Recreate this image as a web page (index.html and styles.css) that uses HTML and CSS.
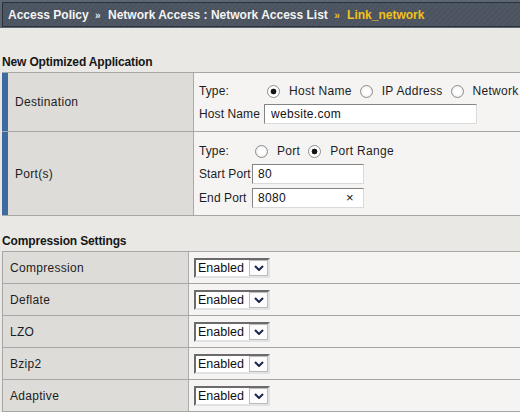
FILE: index.html
```html
<!DOCTYPE html>
<html lang="en">
<head>
<meta charset="utf-8">
<title>Link_network</title>
<link rel="stylesheet" href="styles.css">
</head>
<body>
<div class="topbar">
  <div class="crumbs">
    <span class="crumb">Access Policy</span>
    <span class="sep">»</span>
    <span class="crumb">Network Access : Network Access List</span>
    <span class="sep current">»</span>
    <span class="crumb current">Link_network</span>
  </div>
</div>

<h2 class="section-title">New Optimized Application</h2>
<div class="props">
  <div class="prop-row">
    <div class="prop-label">Destination</div>
    <div class="prop-value">
      <div class="fields dest">
        <span class="field-label">Type:</span>
        <div class="radios">
          <input type="radio" name="dtype" checked><span class="radio-text">Host Name</span>
          <input type="radio" name="dtype"><span class="radio-text">IP Address</span>
          <input type="radio" name="dtype"><span class="radio-text">Network</span>
        </div>
        <span class="field-label">Host Name</span>
        <div><input class="text wide" type="text" value="website.com"></div>
      </div>
    </div>
  </div>
  <div class="prop-row">
    <div class="prop-label">Port(s)</div>
    <div class="prop-value tall">
      <div class="fields ports">
        <span class="field-label">Type:</span>
        <div class="radios">
          <input type="radio" name="ptype"><span class="radio-text">Port</span>
          <input type="radio" name="ptype" checked><span class="radio-text">Port Range</span>
        </div>
        <span class="field-label">Start Port</span>
        <div><input class="text narrow" type="text" value="80"></div>
        <span class="field-label">End Port</span>
        <div class="clear-wrap"><input class="text narrow" type="text" value="8080"><span class="clear">×</span></div>
      </div>
    </div>
  </div>
</div>

<h2 class="section-title second">Compression Settings</h2>
<div class="settings">
  <div class="set-row">
    <div class="set-label">Compression</div>
    <div class="set-value"><span class="select"><span class="select-value">Enabled</span><span class="select-btn"><svg width="10" height="6" viewBox="0 0 10 6"><path d="M1 1 L5 5 L9 1" fill="none" stroke="#1c2550" stroke-width="2"/></svg></span></span></div>
  </div>
  <div class="set-row">
    <div class="set-label">Deflate</div>
    <div class="set-value"><span class="select"><span class="select-value">Enabled</span><span class="select-btn"><svg width="10" height="6" viewBox="0 0 10 6"><path d="M1 1 L5 5 L9 1" fill="none" stroke="#1c2550" stroke-width="2"/></svg></span></span></div>
  </div>
  <div class="set-row">
    <div class="set-label">LZO</div>
    <div class="set-value"><span class="select"><span class="select-value">Enabled</span><span class="select-btn"><svg width="10" height="6" viewBox="0 0 10 6"><path d="M1 1 L5 5 L9 1" fill="none" stroke="#1c2550" stroke-width="2"/></svg></span></span></div>
  </div>
  <div class="set-row">
    <div class="set-label">Bzip2</div>
    <div class="set-value"><span class="select"><span class="select-value">Enabled</span><span class="select-btn"><svg width="10" height="6" viewBox="0 0 10 6"><path d="M1 1 L5 5 L9 1" fill="none" stroke="#1c2550" stroke-width="2"/></svg></span></span></div>
  </div>
  <div class="set-row">
    <div class="set-label">Adaptive</div>
    <div class="set-value"><span class="select"><span class="select-value">Enabled</span><span class="select-btn"><svg width="10" height="6" viewBox="0 0 10 6"><path d="M1 1 L5 5 L9 1" fill="none" stroke="#1c2550" stroke-width="2"/></svg></span></span></div>
  </div>
</div>
</body>
</html>
```

FILE: styles.css
```css
html, body {
  margin: 0;
  padding: 0;
}
body {
  background: #e9e8e5;
  font-family: "Liberation Sans", Arial, sans-serif;
  font-size: 12px;
  letter-spacing: 0.3px;
  color: #1d1d1f;
  overflow: hidden;
}

.topbar {
  background: #5c6672;
  padding: 2px 0 1px 2px;
}
.crumbs {
  height: 23px;
  line-height: 24px;
  border: 1px solid #2c323b;
  border-right: none;
  padding-left: 5px;
  background: repeating-linear-gradient(135deg, #4e5763 0 2px, #4a535e 2px 4px);
  color: #f4f4f4;
  font-weight: bold;
  letter-spacing: 0;
  white-space: nowrap;
}
.sep {
  font-size: 10px;
  margin: 0 4px 0 3px;
  color: #e8e8e8;
}
.current {
  color: #f2c21b;
}

.section-title {
  margin: 26px 0 2px 0;
  padding-left: 2px;
  font-size: 12px;
  line-height: 16px;
  font-weight: bold;
  letter-spacing: -0.15px;
  color: #161616;
}
.section-title.second {
  margin-top: 17px;
}

.props {
  margin-left: 2px;
  border-top: 1px solid #a6a6a6;
}
.prop-row {
  display: grid;
  grid-template-columns: 192px 1fr;
  border-bottom: 1px solid #a6a6a6;
}
.prop-label {
  box-sizing: border-box;
  border-left: 6px solid #3d6a9f;
  border-right: 1px solid #aaaaaa;
  background: #dedcd8;
  padding-left: 7px;
  display: flex;
  align-items: center;
}
.prop-value {
  background: #f5f4f2;
  padding: 9px 0 7px 5px;
}
.prop-value.tall {
  padding-top: 10px;
}
.fields {
  display: grid;
  column-gap: 2px;
  row-gap: 4px;
  align-items: center;
}
.fields.dest {
  grid-template-columns: 63px 1fr;
}
.fields.ports {
  grid-template-columns: 51px 1fr;
}
.field-label {
  line-height: 18px;
  white-space: nowrap;
  letter-spacing: 0.1px;
}
.radios {
  display: flex;
  align-items: center;
  height: 18px;
  white-space: nowrap;
}
.radios input[type="radio"] {
  appearance: none;
  -webkit-appearance: none;
  width: 13px;
  height: 13px;
  margin: 0 9px 0 8px;
  border: 1px solid #8d8d8d;
  border-radius: 50%;
  box-sizing: border-box;
  background: radial-gradient(circle, #ffffff 0 3px, #f0f0f0 5px);
}
.radios input[type="radio"]:first-child {
  margin-left: 3px;
}
.radios input[type="radio"]:checked {
  background: radial-gradient(circle, #141414 0 2.6px, #ffffff 3.2px);
}

.text {
  box-sizing: border-box;
  height: 20px;
  border: 1px solid;
  border-color: #858585 #dadada #dadada #858585;
  background: #ffffff;
  font-family: "Liberation Sans", Arial, sans-serif;
  font-size: 12px;
  letter-spacing: 0.3px;
  color: #111;
  padding: 0 5px;
  margin: 0;
  display: block;
  outline: none;
}
.text.wide {
  width: 213px;
  padding-left: 6px;
}
.text.narrow {
  width: 112px;
}
.clear-wrap {
  position: relative;
  width: 112px;
}
.clear {
  position: absolute;
  left: 94px;
  top: 2px;
  font-size: 13px;
  line-height: 16px;
  color: #111;
}

.settings {
  margin-left: 2px;
  border-left: 1px solid #a6a6a6;
  border-top: 1px solid #a6a6a6;
}
.set-row {
  display: grid;
  grid-template-columns: 186px 1fr;
  height: 32px;
  box-sizing: border-box;
  border-bottom: 1px solid #a6a6a6;
}
.set-label {
  box-sizing: border-box;
  background: #dedcd8;
  border-right: 1px solid #aaaaaa;
  padding-left: 7px;
  display: flex;
  align-items: center;
}
.set-value {
  background: #f5f4f2;
  padding-left: 5px;
  display: flex;
  align-items: center;
}
.select {
  display: inline-flex;
  align-items: center;
  box-sizing: border-box;
  width: 76px;
  height: 20px;
  border: 2px solid;
  border-color: #6b6b6b #e2e2e2 #e2e2e2 #6b6b6b;
  background: #ffffff;
}
.select-value {
  flex: 1;
  padding-left: 2px;
  color: #0e0e14;
  font-size: 12.5px;
  letter-spacing: 0;
}
.select-btn {
  box-sizing: border-box;
  width: 19px;
  height: 16px;
  border: 1px solid #bcbcbc;
  display: flex;
  align-items: center;
  justify-content: center;
  background: #fcfcfc;
}
```
